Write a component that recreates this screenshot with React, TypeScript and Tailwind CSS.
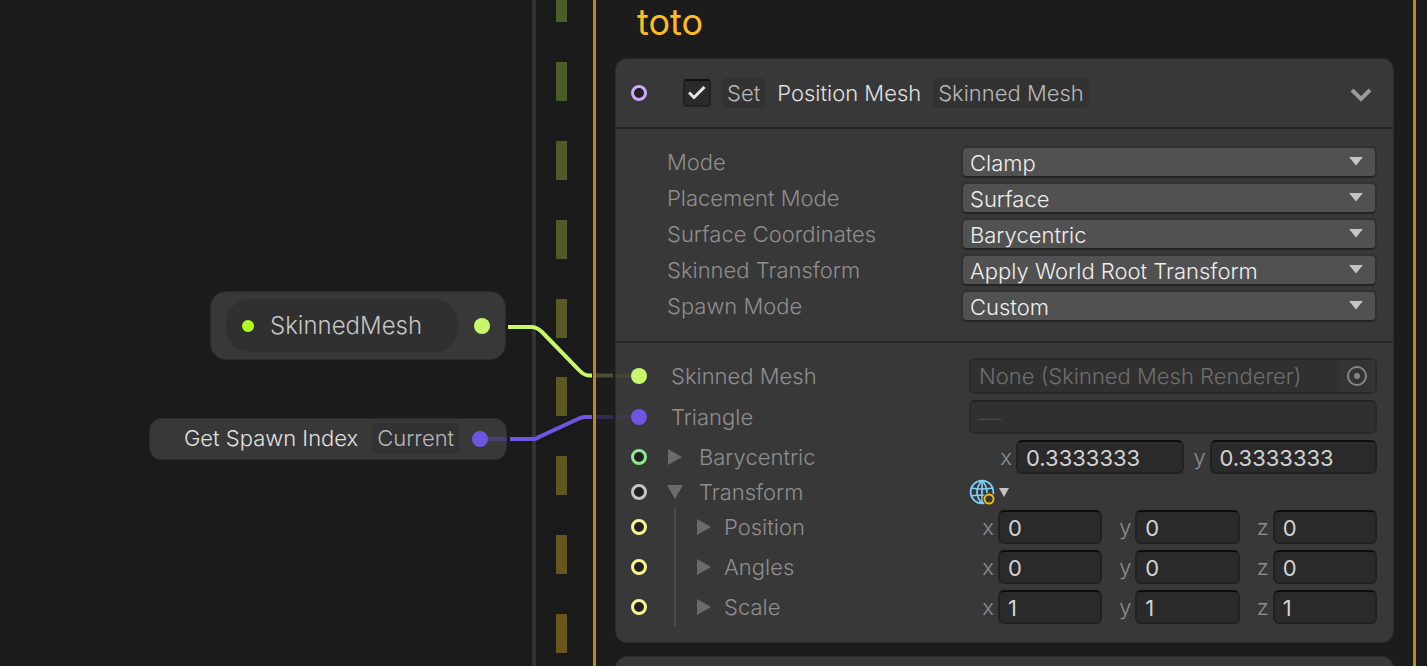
import { useState, type ReactNode } from "react";

const SETTINGS = [
  { label: "Mode", value: "Clamp", options: ["Clamp", "Wrap", "Mirror"] },
  { label: "Placement Mode", value: "Surface", options: ["Vertex", "Edge", "Surface"] },
  { label: "Surface Coordinates", value: "Barycentric", options: ["Barycentric", "Uniform"] },
  {
    label: "Skinned Transform",
    value: "Apply World Root Transform",
    options: ["None", "Apply Local Root Transform", "Apply World Root Transform"],
  },
  { label: "Spawn Mode", value: "Custom", options: ["Random", "Custom"] },
];

const VECTORS = [
  { label: "Position", values: ["0", "0", "0"] },
  { label: "Angles", values: ["0", "0", "0"] },
  { label: "Scale", values: ["1", "1", "1"] },
];

const AXES = ["x", "y", "z"];

// flow link between contexts, fades from green to amber
const FLOW_DASHES = [
  "bg-[#4b5d2b]",
  "bg-[#4b5b2a]",
  "bg-[#505b29]",
  "bg-[#545a27]",
  "bg-[#585924]",
  "bg-[#5c5822]",
  "bg-[#60571f]",
  "bg-[#66561d]",
  "bg-[#6a551b]",
];

function Port({ className }: { className: string }) {
  return <span className={`h-4 w-4 shrink-0 rounded-full ${className}`} />;
}

function Tag({ children }: { children: ReactNode }) {
  return <span className="rounded bg-[#323232] px-[5px] text-[#b8b8b8]">{children}</span>;
}

function Arrow({ open }: { open?: boolean }) {
  return (
    <svg width="16" height="16" viewBox="0 0 16 16" fill="#6b6b6b" aria-hidden="true">
      {open ? <path d="M0 1h16L8 15z" /> : <path d="M1 0l14 8-14 8z" />}
    </svg>
  );
}

function Dropdown({ label, value, options }: { label: string; value: string; options: string[] }) {
  const [current, setCurrent] = useState(value);
  const id = label.toLowerCase().replace(/ /g, "-");

  return (
    <div className="flex h-8 items-center">
      <label htmlFor={id} className="w-[294px] shrink-0 text-[#8e8e8e]">
        {label}
      </label>
      <div className="relative h-8 min-w-0 flex-1">
        <select
          id={id}
          value={current}
          onChange={(e) => setCurrent(e.target.value)}
          className="h-full w-full appearance-none rounded-md border-2 border-[#303030] border-b-[#242424] bg-[#515151] pr-10 pl-[7px] text-[#eee] outline-none"
        >
          {options.map((o) => (
            <option key={o}>{o}</option>
          ))}
        </select>
        <svg
          className="pointer-events-none absolute top-[11px] right-[13px]"
          width="16"
          height="9"
          viewBox="0 0 16 9"
          fill="#c4c4c4"
          aria-hidden="true"
        >
          <path d="M1 0h14L8 8.5z" />
        </svg>
      </div>
    </div>
  );
}

function NumberField({ axis, name, value }: { axis: string; name: string; value: string }) {
  return (
    <label className="flex min-w-0 flex-1 items-center justify-end gap-1 text-[#8e8e8e]">
      <span className="w-3 text-center">{axis}</span>
      <input
        aria-label={`${name} ${axis}`}
        defaultValue={value}
        className="h-[34px] min-w-0 flex-1 rounded-md border-2 border-[#212121] border-t-[#0d0d0d] bg-[#2a2a2a] px-2 pt-[2px] font-normal text-[#d2d2d2] outline-none"
      />
    </label>
  );
}

function Row({
  port,
  label,
  foldout,
  open,
  nested,
  className = "h-[34px]",
  children,
}: {
  port: string;
  label: string;
  foldout?: boolean;
  open?: boolean;
  nested?: boolean;
  className?: string;
  children: ReactNode;
}) {
  return (
    <div className={`flex items-center pr-4 pl-[15px] ${className}`}>
      <div className="flex w-[338px] shrink-0 items-center text-[#8e8e8e]">
        <Port className={port} />
        {foldout ? (
          <button
            type="button"
            className={nested ? "ml-[49px] flex items-center gap-3" : "ml-5 flex items-center gap-4"}
          >
            <Arrow open={open} />
            {label}
          </button>
        ) : (
          <span className="ml-6">{label}</span>
        )}
      </div>
      <div className="flex min-w-0 flex-1">{children}</div>
    </div>
  );
}

function Wires() {
  return (
    <svg
      className="pointer-events-none absolute top-0 left-0"
      width="640"
      height="460"
      viewBox="0 0 640 460"
      fill="none"
      strokeWidth="4"
      aria-hidden="true"
    >
      <g stroke="#c8f76b">
        <path d="M508 327H531Q537 327 542 332L579 370Q584 375.500 589 375.500H592" />
        <path d="M596 375.500H613" opacity="0.25" />
        <path d="M615 376H632" opacity="0.07" />
      </g>
      <g stroke="#6f55e0">
        <path d="M488 439H507" opacity="0.3" />
        <path d="M510 439H534Q536 439 539 437L580 418Q583 417 586 417H592" />
        <path d="M596 417H613" opacity="0.25" />
        <path d="M615 417H632" opacity="0.1" />
      </g>
    </svg>
  );
}

function MeshBlock() {
  return (
    <section className="rounded-xl border border-[#2b2b2b] bg-[#383838]">
      <header className="flex h-[70px] items-center border-b-2 border-[#252525] pr-[21px] pl-[15px]">
        <Port className="border-[3px] border-[#cfa8ff] bg-[#212121]" />
        <label className="relative ml-9 flex h-7 w-7 items-center justify-center">
          <input
            type="checkbox"
            defaultChecked
            aria-label="Enable block"
            className="peer h-7 w-7 appearance-none rounded border-2 border-[#212121] border-t-[#0d0d0d] bg-[#2a2a2a]"
          />
          <svg
            className="pointer-events-none absolute top-[7px] left-[5px] hidden peer-checked:block"
            width="18"
            height="14"
            viewBox="0 0 18 14"
            fill="none"
            stroke="#e4e4e4"
            strokeWidth="3"
            aria-hidden="true"
          >
            <path d="M1 6.5L6 11.5L16.5 1" />
          </svg>
        </label>
        <h2 className="ml-[11px] flex items-center gap-3 text-[#e0e0e0]">
          <Tag>Set</Tag>
          Position Mesh
          <Tag>Skinned Mesh</Tag>
        </h2>
        <button type="button" aria-label="Collapse block" className="ml-auto pt-1">
          <svg width="22" height="14" viewBox="0 0 22 14" fill="none" stroke="#999" strokeWidth="4">
            <path d="M2 2l9 9 9-9" />
          </svg>
        </button>
      </header>

      <div className="flex flex-col gap-1 border-b-2 border-[#2a2a2a] pt-[17px] pr-4 pb-[19px] pl-[51px]">
        {SETTINGS.map((s) => (
          <Dropdown key={s.label} {...s} />
        ))}
      </div>

      <div className="flex flex-col gap-[6px] pt-[15px] pb-[18px]">
        <Row port="bg-[#c8f76b]" label="Skinned Mesh" className="h-9">
          <div className="flex h-9 min-w-0 flex-1 items-center rounded-md border-2 border-[#2a2a2a] bg-[#303030]">
            <input
              aria-label="Skinned Mesh"
              disabled
              defaultValue="None (Skinned Mesh Renderer)"
              className="min-w-0 flex-1 pl-2 text-[#6e6e6e]"
            />
            <button
              type="button"
              aria-label="Select object"
              className="flex h-full w-9 items-center justify-center bg-[#343434]"
            >
              <svg width="20" height="20" viewBox="0 0 20 20" fill="none" stroke="#858585" strokeWidth="2">
                <circle cx="10" cy="10" r="9" />
                <circle cx="10" cy="10" r="3" fill="#858585" stroke="none" />
              </svg>
            </button>
          </div>
        </Row>
        <Row port="bg-[#6f55e0]" label="Triangle">
          <input
            aria-label="Triangle"
            disabled
            defaultValue="—"
            className="h-[34px] min-w-0 flex-1 rounded-md border-2 border-[#2a2a2a] border-t-[#222] bg-[#303030] px-2 pt-[2px] text-[#4c4c4c]"
          />
        </Row>
        <Row port="border-[3px] border-[#8fe88f] bg-[#212121]" label="Barycentric" foldout>
          <div className="flex min-w-0 flex-1 gap-[10px] pl-[31px]">
            <NumberField axis="x" name="Barycentric" value="0.3333333" />
            <NumberField axis="y" name="Barycentric" value="0.3333333" />
          </div>
        </Row>
        <Row
          port="border-[3px] border-[#c4c4c4] bg-[#212121]"
          label="Transform"
          foldout
          open
          className="h-6"
        >
          <button type="button" aria-label="World space" className="flex items-center gap-1">
            <svg width="26" height="26" viewBox="0 0 26 26" fill="none" stroke="#7fd0f7" strokeWidth="1.7">
              <circle cx="13" cy="13" r="11.4" />
              <path d="M13 1.5v23M2 9q11 2 22 0M2 17q11-2 22 0" />
              <path d="M12.5 2q-9 11 0 22M13.5 2q9 11 0 22" />
              <circle cx="20" cy="20" r="6.5" fill="#383838" stroke="none" />
              <circle cx="20" cy="20" r="4.5" stroke="#f2b90f" strokeWidth="2" />
            </svg>
            <svg width="10" height="9" viewBox="0 0 10 9" fill="#c4c4c4">
              <path d="M0 0h10L5 9z" />
            </svg>
          </button>
        </Row>
        <div className="relative flex flex-col gap-[6px]">
          <span className="absolute -top-[2px] -bottom-[2px] left-[58px] w-[2px] bg-[#4c4c4c]" />
          {VECTORS.map((v) => (
            <Row
              key={v.label}
              port="border-[3px] border-[#f7f78f] bg-[#212121]"
              label={v.label}
              foldout
              nested
            >
              <div className="flex min-w-0 flex-1 gap-[17px] pl-[13px]">
                {AXES.map((axis, i) => (
                  <NumberField key={axis} axis={axis} name={v.label} value={v.values[i]} />
                ))}
              </div>
            </Row>
          ))}
        </div>
      </div>
    </section>
  );
}

export default function App() {
  return (
    <main className="relative flex h-screen overflow-hidden bg-[#1b1b1b] font-['Inter',sans-serif] text-[22px] leading-[30px] font-light [font-optical-sizing:none]">
      <div className="relative w-[532px] shrink-0">
        <div className="absolute top-[291px] left-[210px] flex h-[69px] w-[296px] items-center rounded-2xl border border-[#2b2b2b] bg-[#383838] px-[15px]">
          <div className="flex h-[53px] w-[232px] items-center gap-4 rounded-3xl bg-[#303030] pl-4 text-2xl text-[#c4c4c4]">
            <span className="h-3 w-3 rounded-full bg-[#b0ff1f]" />
            SkinnedMesh
          </div>
          <Port className="ml-auto bg-[#c8f76b]" />
        </div>
        <div className="absolute top-[418px] left-[149px] flex h-[42px] w-[358px] items-center rounded-xl border border-[#2b2b2b] bg-[#383838] pr-[18px] pl-[34px] text-[#e0e0e0]">
          <div className="flex items-center gap-[14px] pb-[2px]">
            Get Spawn Index
            <Tag>Current</Tag>
          </div>
          <Port className="ml-auto bg-[#6f55e0]" />
        </div>
      </div>

      <div className="flex min-w-0 flex-1 border-l-4 border-[#333] bg-[#1a1a1a] pr-[11px]">
        <div className="-mt-[17px] mr-[7px] flex h-[670px] w-[50px] shrink-0 flex-col items-center justify-between">
          {FLOW_DASHES.map((color) => (
            <span key={color} className={`h-[39px] w-[11px] shrink-0 ${color}`} />
          ))}
        </div>
        <div className="min-w-0 flex-1 border-x-[3px] border-[#b98a1c] bg-[#1c1c1c] px-[19px]">
          <h1 className="flex h-[58px] items-start pl-[22px] text-4xl leading-[44px] font-normal text-[#ffbb1f]">
            toto
          </h1>
          <MeshBlock />
          <div className="mt-[13px] h-10 rounded-xl border border-[#2b2b2b] bg-[#383838]" />
        </div>
      </div>

      <Wires />
    </main>
  );
}
